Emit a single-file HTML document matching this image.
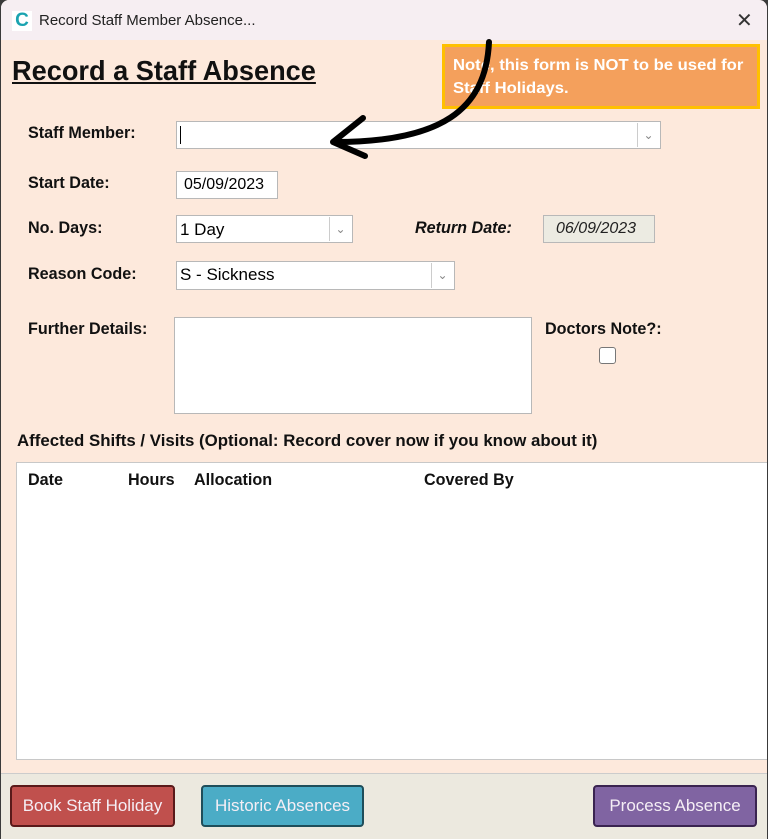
<!DOCTYPE html>
<html><head><style>
*{margin:0;padding:0;box-sizing:border-box}
body{width:768px;height:839px;overflow:hidden;background:#3a3a3a;font-family:"Liberation Sans",Arial,sans-serif;position:relative}
.win{position:absolute;left:1px;top:0;width:766px;height:839px;background:#fde9dc;border-radius:8px 8px 0 0;overflow:hidden}
.tb{position:absolute;left:0;top:0;width:766px;height:40px;background:#f6eef2}
.abs{position:absolute}
.lbl{position:absolute;font-weight:bold;font-size:17px;color:#111;transform-origin:0 0;transform:scaleX(0.95)}
.box{position:absolute;background:#fff;border:1px solid #b8b8b8}
.dd{position:absolute;top:1px;right:1px;bottom:1px;width:22px;border-left:1px solid #ccc;background:#fff;color:#888;font-size:12px;text-align:center}
.btn{position:absolute;top:785px;height:42px;border-radius:4px;color:#f5eef5;font-size:17px;text-align:center;line-height:38px}
</style></head><body>
<div class="win">
<div class="tb">
 <div class="abs" style="left:11px;top:11px;width:20px;height:20px;background:#fff;color:#1aa3b0;font-weight:bold;font-size:19px;line-height:20px;text-align:center">C</div>
 <div class="abs" style="left:38px;top:12px;font-size:15px;color:#222">Record Staff Member Absence...</div>
 <div class="abs" style="left:735px;top:8px;font-size:20px;color:#333">✕</div>
</div>
<div class="abs" style="left:11px;top:55px;font-size:28px;font-weight:bold;color:#111;text-decoration:underline;transform-origin:0 0;transform:scaleX(0.97)">Record a Staff Absence</div>
<div class="abs" style="left:441px;top:44px;width:318px;height:65px;background:#f4a05c;border:3px solid #ffc000;color:#fff;font-weight:bold;font-size:16px;line-height:23px;padding:7px 0 0 8px;white-space:nowrap;overflow:hidden"><span style="display:inline-block;transform-origin:0 0;transform:scaleX(1.04)">Note, this form is NOT to be used for<br>Staff Holidays.</span></div>

<div class="lbl" style="left:27px;top:123px">Staff Member:</div>
<div class="box" style="left:175px;top:121px;width:485px;height:28px"><div class="abs" style="left:3px;top:4px;width:1px;height:18px;background:#000"></div><div class="dd" style="line-height:24px">⌄</div></div>

<div class="lbl" style="left:27px;top:173px">Start Date:</div>
<div class="box" style="left:175px;top:171px;width:102px;height:28px;font-size:16px;padding:4px 0 0 7px">05/09/2023</div>

<div class="lbl" style="left:27px;top:218px">No. Days:</div>
<div class="box" style="left:175px;top:215px;width:177px;height:28px;font-size:17px;padding:4px 0 0 3px">1 Day<div class="dd" style="line-height:24px">⌄</div></div>
<div class="lbl" style="left:414px;top:218px;font-style:italic">Return Date:</div>
<div class="box" style="left:542px;top:215px;width:112px;height:28px;background:#ecebe2;font-size:16px;font-style:italic;padding:4px 0 0 12px;color:#222">06/09/2023</div>

<div class="lbl" style="left:27px;top:264px">Reason Code:</div>
<div class="box" style="left:175px;top:261px;width:279px;height:29px;font-size:17px;padding:3px 0 0 3px">S - Sickness<div class="dd" style="line-height:25px">⌄</div></div>

<div class="lbl" style="left:27px;top:319px">Further Details:</div>
<div class="box" style="left:173px;top:317px;width:358px;height:97px"></div>
<div class="lbl" style="left:544px;top:319px">Doctors Note?:</div>
<div class="abs" style="left:598px;top:347px;width:17px;height:17px;border:1px solid #777;border-radius:3px;background:#fff"></div>

<div class="lbl" style="left:16px;top:431px;font-size:17px;transform:scaleX(0.99)">Affected Shifts / Visits (Optional: Record cover now if you know about it)</div>
<div class="box" style="left:15px;top:462px;width:752px;height:298px;border-color:#c8c8c8">
 <div class="lbl" style="left:11px;top:7px">Date</div>
 <div class="lbl" style="left:111px;top:7px">Hours</div>
 <div class="lbl" style="left:177px;top:7px">Allocation</div>
 <div class="lbl" style="left:407px;top:7px">Covered By</div>
</div>
<div class="abs" style="left:0;top:773px;width:766px;height:66px;background:#ece9df;border-top:1px solid #ccc"></div>
<div class="btn" style="left:9px;width:165px;background:#c0504d;border:2px solid #5a1a1a">Book Staff Holiday</div>
<div class="btn" style="left:200px;width:163px;background:#4bacc6;border:2px solid #1f4e5a">Historic Absences</div>
<div class="btn" style="left:592px;width:164px;background:#8064a2;border:2px solid #3a2450">Process Absence</div>
<svg class="abs" style="left:0;top:0" width="768" height="839">
<path d="M488,42 C485,110 440,142 334,142" fill="none" stroke="#000" stroke-width="6" stroke-linecap="round"/>
<path d="M362,118 L332,142 L364,156" fill="none" stroke="#000" stroke-width="6" stroke-linecap="round" stroke-linejoin="round"/>
</svg>
</div>
</body></html>
